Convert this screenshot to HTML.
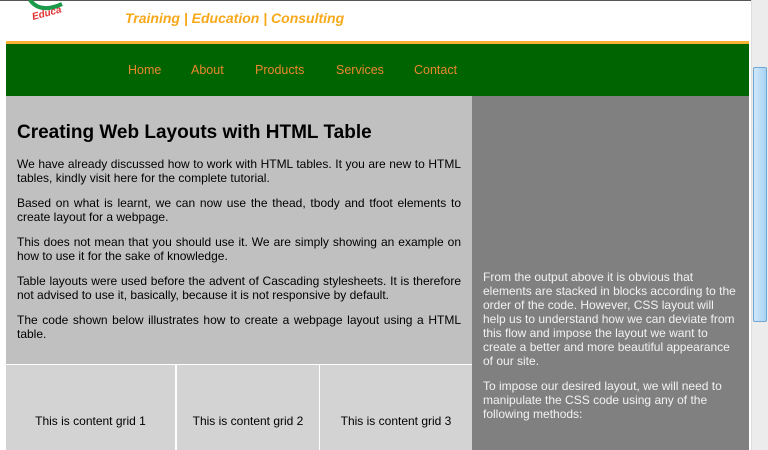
<!DOCTYPE html>
<html><head><style>
*{margin:0;padding:0;box-sizing:border-box}
body{width:768px;height:450px;overflow:hidden;background:#fff;font-family:"Liberation Sans",Arial,sans-serif;position:relative}
.topline{position:absolute;left:0;top:0;width:751px;height:1px;background:#555}
.tag{position:absolute;left:125px;top:10px;font-size:14px;font-weight:bold;font-style:italic;color:#f7a81b}
.orange{position:absolute;left:6px;top:41px;width:743px;height:3px;background:#f9b233}
.nav{position:absolute;left:6px;top:44px;width:743px;height:52px;background:#006400}
.nav span{position:absolute;top:19px;font-size:12.5px;color:#e8872a}
.left{position:absolute;left:6px;top:96px;width:466px;height:268px;background:#c0c0c0;padding:0 11px}
.left h1{font-size:19px;margin-top:26px;margin-bottom:13px;color:#000}
.left p{font-size:12px;line-height:14px;text-align:justify;margin-bottom:11px;color:#000}
.right{position:absolute;left:472px;top:96px;width:277px;height:354px;background:#808080;padding:174px 11px 0 11px;color:#f2f2f2}
.right p{font-size:12px;line-height:14px;margin-bottom:11px}
.cell{position:absolute;top:364px;height:86px;background:#d3d3d3;border-top:1px solid #fff;font-size:12px;color:#000;text-align:center;padding-top:49px}
.sb{position:absolute;left:751px;top:0;width:17px;height:450px;background:#ececec;border-left:1px solid #ddd}
.thumb{position:absolute;left:753px;top:67px;width:14px;height:255px;background:linear-gradient(90deg,#cfe8fb,#a9d3f3);border:1px solid #6fa6d4;border-radius:2px}
</style></head><body>
<div class="topline"></div>
<svg style="position:absolute;left:20px;top:0" width="60" height="22">
<path d="M10 0 Q20 14 42 4" stroke="#1a9a4a" stroke-width="4" fill="none"/>
<text x="13" y="20" font-family="Liberation Sans" font-size="10" font-weight="bold" font-style="italic" fill="#e03030" transform="rotate(-15 13 20)">Educa</text>
</svg>
<div class="tag">Training | Education | Consulting</div>
<div class="orange"></div>
<div class="nav">
<span style="left:122px">Home</span><span style="left:185px">About</span><span style="left:249px">Products</span><span style="left:330px">Services</span><span style="left:408px">Contact</span>
</div>
<div class="left">
<h1>Creating Web Layouts with HTML Table</h1>
<p>We have already discussed how to work with HTML tables. It you are new to HTML tables, kindly visit here for the complete tutorial.</p>
<p>Based on what is learnt, we can now use the thead, tbody and tfoot elements to create layout for a webpage.</p>
<p>This does not mean that you should use it. We are simply showing an example on how to use it for the sake of knowledge.</p>
<p>Table layouts were used before the advent of Cascading stylesheets. It is therefore not advised to use it, basically, because it is not responsive by default.</p>
<p>The code shown below illustrates how to create a webpage layout using a HTML table.</p>
</div>
<div class="right">
<p>From the output above it is obvious that elements are stacked in blocks according to the order of the code. However, CSS layout will help us to understand how we can deviate from this flow and impose the layout we want to create a better and more beautiful appearance of our site.</p>
<p>To impose our desired layout, we will need to manipulate the CSS code using any of the following methods:</p>
</div>
<div class="cell" style="left:6px;width:169px">This is content grid 1</div>
<div class="cell" style="left:176px;width:143px;border-left:1px solid #fff">This is content grid 2</div>
<div class="cell" style="left:319px;width:153px;border-left:1px solid #fff">This is content grid 3</div>
<div class="sb"></div>
<div class="thumb"></div>
</body></html>
